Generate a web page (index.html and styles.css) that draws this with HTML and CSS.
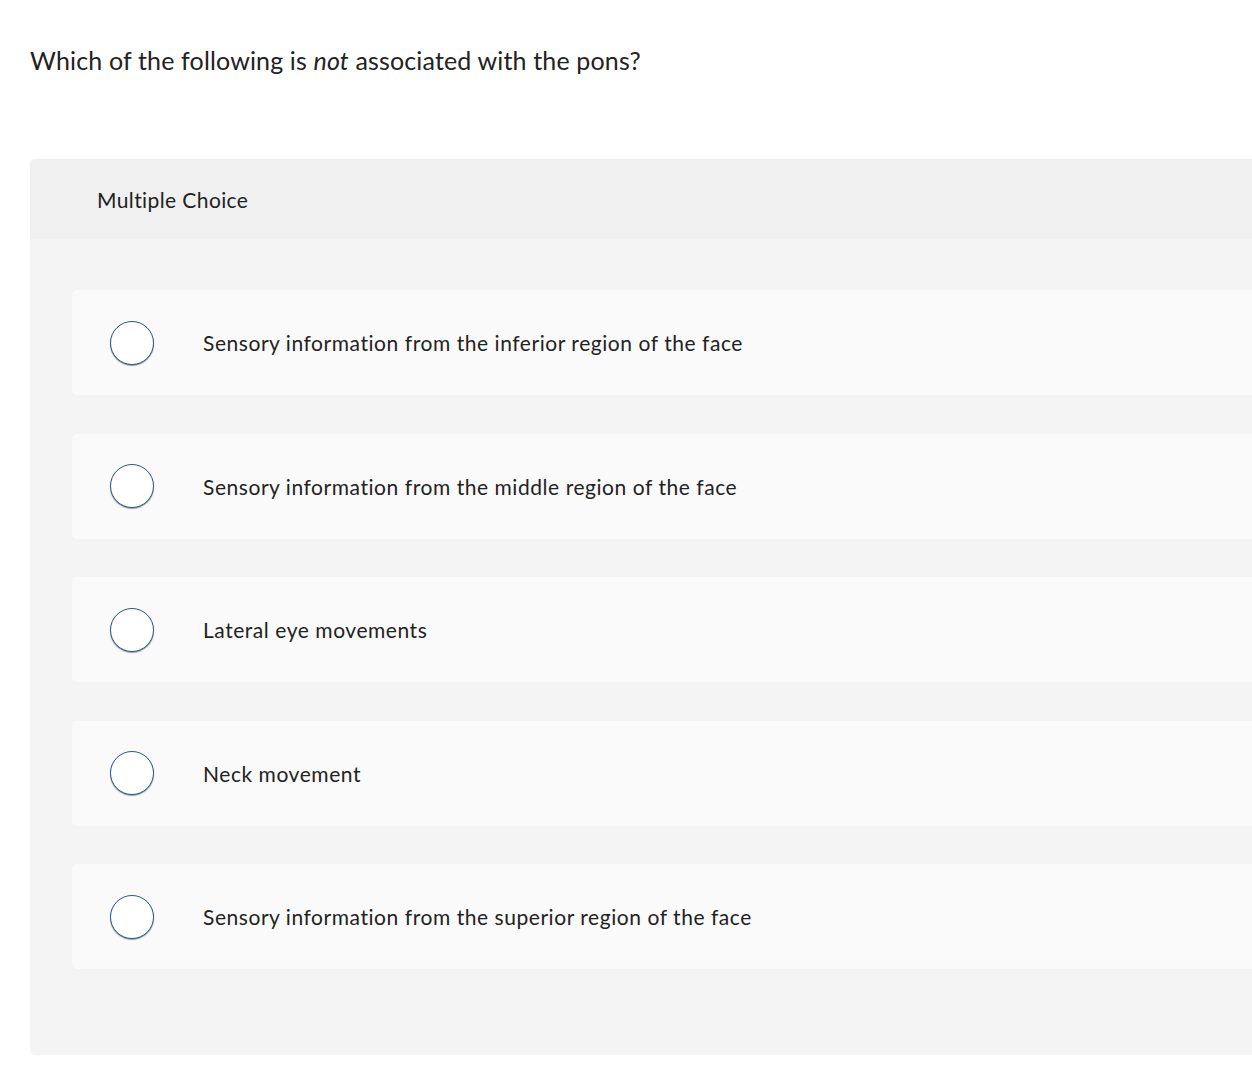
FILE: index.html
```html
<!DOCTYPE html>
<html lang="en">
<head>
<meta charset="utf-8">
<title>Multiple Choice</title>
<link rel="stylesheet" href="styles.css">
</head>
<body>
<main class="page">
  <p class="question">Which of the following is <em>not</em> associated with the pons?</p>
  <section class="panel">
    <header class="panel-head">Multiple Choice</header>
    <div class="panel-body">
      <label class="option"><span class="radio"></span><span class="option-text">Sensory information from the inferior region of the face</span></label>
      <label class="option"><span class="radio"></span><span class="option-text">Sensory information from the middle region of the face</span></label>
      <label class="option"><span class="radio"></span><span class="option-text">Lateral eye movements</span></label>
      <label class="option"><span class="radio"></span><span class="option-text">Neck movement</span></label>
      <label class="option"><span class="radio"></span><span class="option-text">Sensory information from the superior region of the face</span></label>
    </div>
  </section>
</main>
</body>
</html>
```

FILE: styles.css
```css
html, body {
  margin: 0;
  padding: 0;
  background: #ffffff;
  overflow: hidden;
}

body {
  font-family: Lato, "Open Sans", "Liberation Sans", sans-serif;
  color: #222222;
}

.page {
  padding: 0 0 0 30px;
  width: 1300px;
}

.question {
  margin: 0;
  padding-top: 44px;
  font-size: 25px;
  line-height: 32px;
  height: 115px;
  color: #222222;
  letter-spacing: 0.15px;
}

.question em {
  font-style: italic;
}

.panel {
  width: 1260px;
  border-radius: 5px;
  background: #f4f4f4;
  overflow: hidden;
}

.panel-head {
  background: #f0f0f0;
  height: 80px;
  display: flex;
  align-items: center;
  padding-left: 67px;
  font-size: 21px;
  letter-spacing: 0.4px;
  color: #222222;
}

.panel-body {
  padding: 51px 0 86px 42px;
  display: flex;
  flex-direction: column;
  gap: 38.5px;
}

.option {
  display: flex;
  align-items: center;
  height: 105px;
  background: #fafafa;
  border-radius: 5px 0 0 5px;
  padding-left: 38px;
  cursor: pointer;
}

.radio {
  flex: none;
  width: 42px;
  height: 42px;
  border: 1.5px solid #2b5689;
  border-radius: 50%;
  background: #ffffff;
  box-shadow: 0 1px 1px rgba(0, 0, 0, 0.4);
}

.option-text {
  margin-left: 49px;
  font-size: 21px;
  letter-spacing: 0.55px;
  color: #222222;
}
```
